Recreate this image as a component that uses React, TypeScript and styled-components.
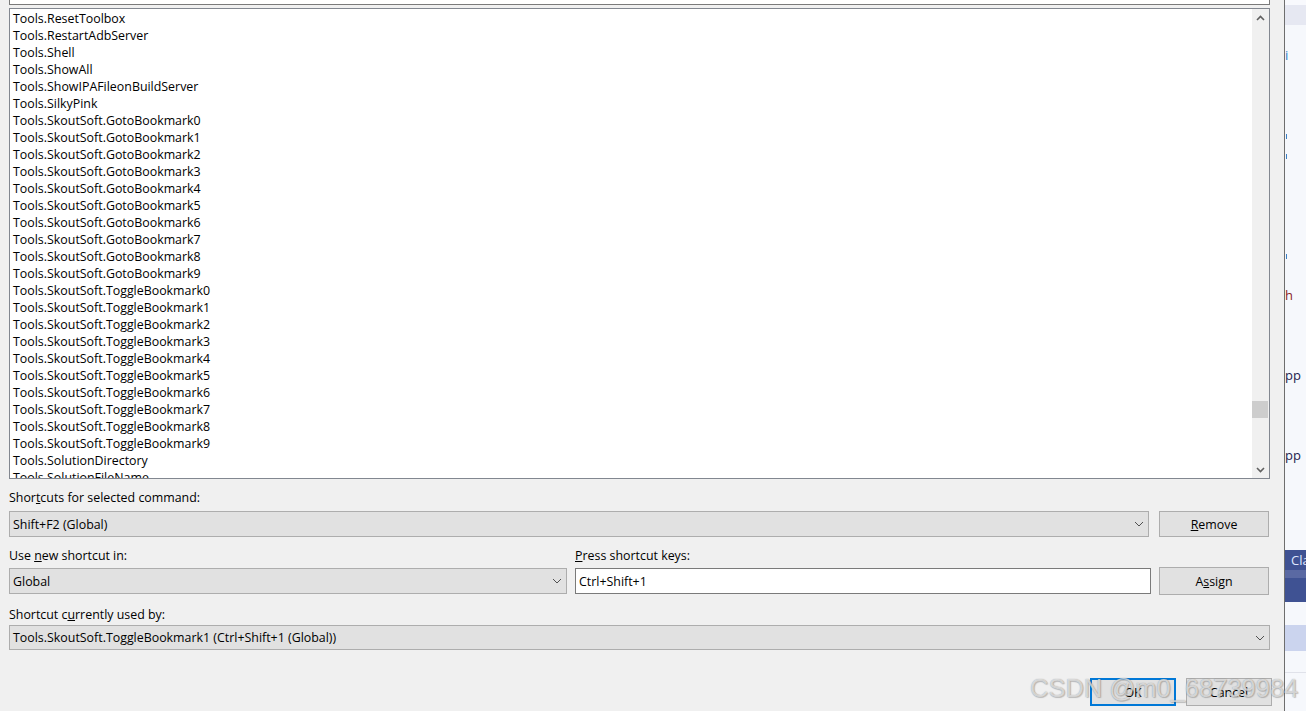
import styled, { createGlobalStyle } from 'styled-components'

const GlobalStyle = createGlobalStyle`
    html, body {
        margin: 0;
        padding: 0;
        background: #f0f0f0;
        overflow: hidden;
    }
    body {
        font-family: "Open Sans", "Noto Sans", "Liberation Sans", sans-serif;
        font-size: 12.4px;
        color: #000;
    }
`

const Screen = styled.div`
    position: relative;
    width: 1306px;
    height: 711px;
    display: flex;
    overflow: hidden;
`
const Dialog = styled.div`
    width: 1284px;
    box-sizing: border-box;
    padding: 0 14px 0 9px;
    display: flex;
    flex-direction: column;
    background: #f0f0f0;
`
const Divider = styled.div`
    width: 1px;
    background: #6e6e6e;
`
const TopBox = styled.div`
    height: 25px;
    margin-top: -20px;
    box-sizing: border-box;
    border: 1px solid #7a7a7a;
    background: #fff;
`
const CommandList = styled.div`
    margin-top: 3px;
    height: 471px;
    box-sizing: border-box;
    border: 1px solid #828790;
    background: #fff;
    display: flex;
`
const Rows = styled.div`
    flex: 1;
    overflow: hidden;
    padding-top: 1px;
`
const Row = styled.div`
    height: 17px;
    line-height: 17px;
    padding-left: 3px;
    white-space: nowrap;
`
const ScrollBar = styled.div`
    width: 17px;
    background: #f0f0f0;
    display: flex;
    flex-direction: column;
`
const ScrollButton = styled.div`
    height: 17px;
    display: flex;
    align-items: center;
    justify-content: center;
`
const Track = styled.div`
    flex: 1;
    display: flex;
    flex-direction: column;
`
const Thumb = styled.div<{ $offset: number }>`
    margin-top: ${(p) => p.$offset}px;
    height: 17px;
    width: 16px;
    background: #cdcdcd;
`
const Label = styled.div<{ $top: number; $bottom: number }>`
    margin-top: ${(p) => p.$top}px;
    margin-bottom: ${(p) => p.$bottom}px;
    height: 17px;
    line-height: 17px;
    white-space: nowrap;
`
const LabelGrid = styled.div`
    display: grid;
    grid-template-columns: 558px 576px 110px;
    column-gap: 8px;
    margin-top: 10px;
    margin-bottom: 3px;
`
const FieldRow = styled.div<{ $h?: number; $gap?: number; $right?: number }>`
    display: flex;
    align-items: center;
    gap: ${(p) => p.$gap ?? 8}px;
    height: ${(p) => p.$h ?? 28}px;
    margin-right: ${(p) => p.$right ?? 0}px;
`
const Combo = styled.div<{ $width?: number; $height?: number }>`
    ${(p) => (p.$width ? `width: ${p.$width}px;` : 'flex: 1;')}
    height: ${(p) => p.$height ?? 26}px;
    box-sizing: border-box;
    border: 1px solid #adadad;
    background: #e1e1e1;
    display: flex;
    align-items: center;
    padding: 0 4px 0 3px;
`
const ComboText = styled.span`
    flex: 1;
    white-space: nowrap;
`
const TextInput = styled.div`
    width: 576px;
    height: 26px;
    box-sizing: border-box;
    border: 1px solid #7a7a7a;
    background: #fff;
    display: flex;
    align-items: center;
    padding-left: 3px;
`
const Button = styled.div<{ $primary?: boolean; $width?: number; $height?: number }>`
    width: ${(p) => p.$width ?? 110}px;
    height: ${(p) => p.$height ?? 26}px;
    box-sizing: border-box;
    border: ${(p) => (p.$primary ? '2px solid #0078d7' : '1px solid #adadad')};
    background: #e1e1e1;
    display: flex;
    align-items: center;
    justify-content: center;
`
const FooterRow = styled.div`
    margin-top: 28px;
    margin-right: -2px;
    display: flex;
    justify-content: flex-end;
    gap: 10px;
`
const Strip = styled.div`
    flex: 1;
    background: #f6f8fc;
    display: flex;
    flex-direction: column;
    overflow: hidden;
`
const StripBand = styled.div<{ $h: number; $bg: string }>`
    height: ${(p) => p.$h}px;
    background: ${(p) => p.$bg};
    flex-shrink: 0;
`
const StripLine = styled.div<{ $color: string }>`
    height: 20px;
    line-height: 20px;
    font-size: 13px;
    color: ${(p) => p.$color};
    white-space: nowrap;
    flex-shrink: 0;
`
const Tick = styled.span`
    display: inline-block;
    width: 1px;
    height: 5px;
    margin-left: 1px;
    background: #3b7fc4;
    vertical-align: middle;
`
const HeaderBand = styled.div`
    height: 20px;
    background: #3f5293;
    color: #dfe7ff;
    font-size: 13px;
    line-height: 20px;
    padding-left: 6px;
    white-space: nowrap;
    flex-shrink: 0;
`
const Watermark = styled.div`
    position: absolute;
    left: 1030px;
    top: 674px;
    font-family: "Liberation Sans", Arial, sans-serif;
    font-size: 25.5px;
    color: rgba(246, 246, 246, 0.7);
    text-shadow: 0 0 1px rgba(60, 60, 60, 0.5), 1px 1px 1px rgba(90, 90, 90, 0.3);
    white-space: nowrap;
    pointer-events: none;
`

const ChevronUp = () => (
    <svg width="9" height="6" viewBox="0 0 9 6">
        <polyline points="1,5 4.5,1.5 8,5" fill="none" stroke="#606060" strokeWidth="1.6" />
    </svg>
)
const ChevronDown = () => (
    <svg width="9" height="6" viewBox="0 0 9 6">
        <polyline points="1,1 4.5,4.5 8,1" fill="none" stroke="#606060" strokeWidth="1.6" />
    </svg>
)
const ComboArrow = () => (
    <svg width="10" height="6" viewBox="0 0 10 6">
        <polyline points="1,1 5,5 9,1" fill="none" stroke="#505050" strokeWidth="1" />
    </svg>
)

const commands = [
    'Tools.ResetToolbox',
    'Tools.RestartAdbServer',
    'Tools.Shell',
    'Tools.ShowAll',
    'Tools.ShowIPAFileonBuildServer',
    'Tools.SilkyPink',
    ...Array.from({ length: 10 }, (_, i) => `Tools.SkoutSoft.GotoBookmark${i}`),
    ...Array.from({ length: 10 }, (_, i) => `Tools.SkoutSoft.ToggleBookmark${i}`),
    'Tools.SolutionDirectory',
    'Tools.SolutionFileName',
]

// fragments of the window behind the dialog, one per 20px line
const stripLines: { [k: number]: { text?: string; color: string; tick?: boolean } } = {
    1: { text: 'i', color: '#2f7fc8' },
    5: { tick: true, color: '#3b7fc4' },
    6: { tick: true, color: '#3b7fc4' },
    11: { tick: true, color: '#3b7fc4' },
    13: { text: 'h', color: '#8b1e1e' },
    17: { text: 'pp', color: '#1e1e50' },
    21: { text: 'pp', color: '#1e1e50' },
}

const App = () => {
    const thumbOffset = 375

    return (
        <>
            <GlobalStyle />
            <Screen>
                <Dialog>
                    <TopBox />
                    <CommandList>
                        <Rows>
                            {commands.map((c) => (
                                <Row key={c}>{c}</Row>
                            ))}
                        </Rows>
                        <ScrollBar>
                            <ScrollButton>
                                <ChevronUp />
                            </ScrollButton>
                            <Track>
                                <Thumb $offset={thumbOffset} />
                            </Track>
                            <ScrollButton>
                                <ChevronDown />
                            </ScrollButton>
                        </ScrollBar>
                    </CommandList>

                    <Label $top={10} $bottom={5}>
                        Shor<u>t</u>cuts for selected command:
                    </Label>
                    <FieldRow $h={26} $gap={10} $right={1}>
                        <Combo>
                            <ComboText>Shift+F2 (Global)</ComboText>
                            <ComboArrow />
                        </Combo>
                        <Button>
                            <u>R</u>emove
                        </Button>
                    </FieldRow>

                    <LabelGrid>
                        <span>
                            Use <u>n</u>ew shortcut in:
                        </span>
                        <span>
                            <u>P</u>ress shortcut keys:
                        </span>
                    </LabelGrid>
                    <FieldRow>
                        <Combo $width={558}>
                            <ComboText>Global</ComboText>
                            <ComboArrow />
                        </Combo>
                        <TextInput>Ctrl+Shift+1</TextInput>
                        <Button $height={28}>
                            A<u>s</u>sign
                        </Button>
                    </FieldRow>

                    <Label $top={11} $bottom={2}>
                        Shortcut c<u>u</u>rrently used by:
                    </Label>
                    <FieldRow $h={25}>
                        <Combo $height={25}>
                            <ComboText>Tools.SkoutSoft.ToggleBookmark1 (Ctrl+Shift+1 (Global))</ComboText>
                            <ComboArrow />
                        </Combo>
                    </FieldRow>

                    <FooterRow>
                        <Button $primary $width={86} $height={28}>
                            OK
                        </Button>
                        <Button $width={86} $height={28}>
                            Cancel
                        </Button>
                    </FooterRow>
                </Dialog>
                <Divider />
                <Strip>
                    <StripBand $h={5} $bg="#f8f9fd" />
                    <StripBand $h={20} $bg="#e6e8f2" />
                    {Array.from({ length: 26 }, (_, i) => {
                        const l = stripLines[i]
                        return (
                            <StripLine key={i} $color={l ? l.color : '#000'}>
                                {l?.tick ? <Tick /> : l?.text}
                            </StripLine>
                        )
                    })}
                    <StripBand $h={5} $bg="#f6f8fc" />
                    <HeaderBand>Cla</HeaderBand>
                    <StripBand $h={8} $bg="#5a69a3" />
                    <StripBand $h={24} $bg="#3f5293" />
                    <StripBand $h={23} $bg="#f6f8fc" />
                    <StripBand $h={26} $bg="#cbd4ee" />
                    <StripBand $h={21} $bg="#f6f8fc" />
                    <StripBand $h={1} $bg="#e0e2ea" />
                </Strip>
                <Watermark>CSDN @m0_68739984</Watermark>
            </Screen>
        </>
    )
}

export default App
